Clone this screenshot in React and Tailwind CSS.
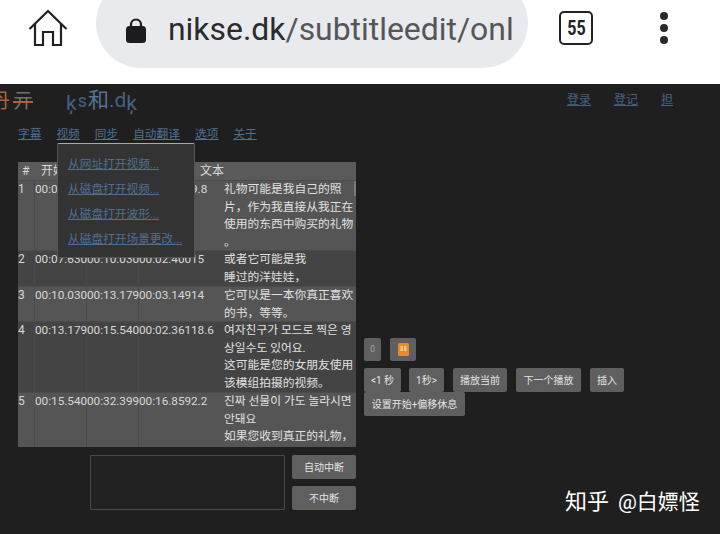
const rows = [
  { n: "1", start: "00:0", end: "", dur: "", cps: "9.8", lines: ["礼物可能是我自己的照", "片，作为我直接从我正在", "使用的东西中购买的礼物", "。"], h: "h-[70px]", bg: "bg-[#555555]" },
  { n: "2", start: "00:07.630", end: "00:10.030", dur: "00:02.400", cps: "15", lines: ["或者它可能是我", "睡过的洋娃娃，"], h: "h-[36px]", bg: "bg-[#444444]" },
  { n: "3", start: "00:10.030", end: "00:13.179", dur: "00:03.149", cps: "14", lines: ["它可以是一本你真正喜欢", "的书，等等。"], h: "h-[35px]", bg: "bg-[#555555]" },
  { n: "4", start: "00:13.179", end: "00:15.540", dur: "00:02.361", cps: "18.6", lines: ["여자친구가 모드로 찍은 영", "상일수도 있어요.", "这可能是您的女朋友使用", "该模组拍摄的视频。"], h: "h-[71px]", bg: "bg-[#444444]" },
  { n: "5", start: "00:15.540", end: "00:32.399", dur: "00:16.859", cps: "2.2", lines: ["진짜 선물이 가도 놀라시면", "안돼요", "如果您收到真正的礼物，"], h: "h-[55px]", bg: "bg-[#555555]" },
];

const navItems = ["字幕", "视频", "同步", "自动翻译", "选项", "关于"];
const menuItems = ["从网址打开视频...", "从磁盘打开视频...", "从磁盘打开波形...", "从磁盘打开场景更改..."];

function Btn({ children, className = "" }) {
  return (
    <button className={`h-6 rounded-[2px] bg-[#5f5f5f] text-[10px] text-[#e4e4e4] ${className}`}>
      {children}
    </button>
  );
}

export default function App() {
  return (
    <div className="relative h-[534px] w-[720px] overflow-hidden bg-[#1f1f1f] font-['Roboto','Noto_Sans_CJK_SC',sans-serif] text-[12px] text-[#d8d8d8]">
      {/* browser bar */}
      <div className="flex h-[84px] items-start overflow-hidden bg-white">
        <svg className="ml-[28px] mt-[9px] h-[38px] w-[40px] shrink-0" viewBox="0 0 40 38" fill="none" stroke="#222" strokeWidth="2.2" strokeLinejoin="miter">
          <path d="M1.5 20 20 2l18.5 18" />
          <path d="M7 15v21h8V23h10v13h8V15" />
        </svg>
        <div className="ml-[28px] -mt-[22px] flex h-[90px] w-[432px] shrink-0 items-center rounded-[45px] bg-[#e9eaee] pl-[30px] pt-[14px]">
          <svg className="h-[25px] w-[20px] shrink-0" viewBox="0 0 20 25" fill="#1c1c1f">
            <path d="M5 10V6.5a5 5 0 0 1 10 0V10" fill="none" stroke="#1c1c1f" strokeWidth="2.2" />
            <rect x="0" y="8" width="20" height="17" rx="3.5" />
          </svg>
          <span className="ml-[22px] w-[346px] overflow-hidden whitespace-nowrap text-[31.9px]">
            <span className="text-[#2b2b2e]">nikse.dk</span>
            <span className="text-[#55565a]">/subtitleedit/onl</span>
          </span>
        </div>
        <div className="ml-[31px] mt-[11px] flex h-[34px] w-[34px] shrink-0 items-center justify-center rounded-[5px] border-[2.5px] border-[#222] text-[20px] font-bold text-[#222]">
          <span className="scale-x-[0.8]">55</span>
        </div>
        <div className="ml-[67px] mt-[12px] flex shrink-0 flex-col gap-[4px]">
          <span className="h-[8px] w-[8px] rounded-full bg-[#2a2a2a]" />
          <span className="h-[8px] w-[8px] rounded-full bg-[#2a2a2a]" />
          <span className="h-[8px] w-[8px] rounded-full bg-[#2a2a2a]" />
        </div>
      </div>

      {/* site header */}
      <div className="flex h-[40px] items-start">
        <div className="-ml-[10px] mt-[3px] flex w-[76px] text-[20px] leading-[28px]">
          <span className="text-[#a9623a]">丹</span>
          <span className="ml-[3px] text-[#77706a] line-through decoration-[#a9623a]">亓</span>
        </div>
        <div className="mt-[2px] whitespace-nowrap text-[21px] leading-[28px] text-[#46627f]">
          <span className="align-[-3px]">ķ</span>
          <span className="ml-[1px] text-[18px]">s</span>
          <span className="ml-[1px] text-[#56738f]">和</span>
          <span>.d</span>
          <span className="align-[-3px]">ķ</span>
        </div>
        <div className="ml-auto mr-[47px] mt-[7px] flex gap-[23px] text-[#46627f] underline">
          <span>登录</span>
          <span>登记</span>
          <span>担</span>
        </div>
      </div>

      {/* nav */}
      <div className="relative flex h-[38px] gap-[15px] pl-[18px] pt-[2px] text-[11.7px] leading-[17px] text-[#4f7092] underline">
        {navItems.map((t) => (
          <span key={t} className="whitespace-nowrap">{t}</span>
        ))}
        <div className="absolute left-[57px] top-[19px] z-10 flex h-[115px] w-[138px] flex-col gap-[8px] rounded-[2px] border border-[#555] border-t-[#aaa] bg-[#333333] pl-[10px] pt-[12px]">
          {menuItems.map((t) => (
            <span key={t} className="w-fit whitespace-nowrap leading-[17px] underline">{t}</span>
          ))}
        </div>
      </div>

      <div className="flex">
        <div className="relative ml-[18px] w-[338px] shrink-0">
          {/* table */}
          <div className="flex h-[18px] items-center bg-[#5a5a5a] leading-[18px]">
            <span className="ml-[4px] w-[19px]">#</span>
            <span>开始</span>
            <span className="ml-[135px]">文本</span>
          </div>
          <span className="absolute right-0 top-[19px] h-[15px] w-[2px] bg-[#7a7a7a]" />
          {rows.map((r) => (
            <div key={r.n} className={`flex ${r.h} ${r.bg} overflow-hidden border-t border-[#4c4c4c] leading-[17.5px]`}>
              <div className="w-[17px] shrink-0 border-r border-[#4a4a4a]">{r.n}</div>
              <div className="flex w-[189px] shrink-0 whitespace-nowrap text-[11.75px]">
                <span className="w-[52px] shrink-0 border-r border-[#4a4a4a]">{r.start}</span>
                <span className="w-[52px] shrink-0 border-r border-[#4a4a4a]">{r.end}</span>
                <span className="w-[52px] shrink-0">{r.dur}</span>
                <span>{r.cps}</span>
              </div>
              <div className="min-w-0 grow text-[11.75px] text-[#e0e0e0]">
                {r.lines.map((l, i) => (
                  <div key={i} className="whitespace-nowrap">{l}</div>
                ))}
              </div>
            </div>
          ))}

          {/* editor */}
          <div className="mt-[8px] flex">
            <div className="ml-[72px] h-[55px] w-[195px] shrink-0 rounded-[1px] border border-[#4a4a4a] bg-[#212121]" />
            <div className="ml-[7px] flex flex-col gap-[7px]">
              <Btn className="w-[64px]">自动中断</Btn>
              <Btn className="w-[64px]">不中断</Btn>
            </div>
          </div>
        </div>

        {/* playback controls */}
        <div className="ml-[8px] pt-[176px]">
          <div className="flex h-[23px] gap-[9px]">
            <div className="flex w-[17px] items-center justify-center rounded-[2px] bg-[#5f5f5f] text-[9px] text-[#a5a5a5]">0</div>
            <div className="flex w-[26px] items-center justify-center rounded-[2px] bg-[#5f5f5f]">
              <svg className="h-[13px] w-[11px]" viewBox="0 0 11 13">
                <rect width="11" height="13" rx="1.5" fill="#e8892b" />
                <rect x="2.5" y="3" width="2.5" height="5" fill="#f5c98a" />
                <rect x="6" y="3" width="2.5" height="5" fill="#f5c98a" />
              </svg>
            </div>
          </div>
          <div className="mt-[7px] flex">
            <Btn className="w-[37px]">&lt;1 秒</Btn>
            <Btn className="ml-[8px] w-[35px]">1秒&gt;</Btn>
            <Btn className="ml-[9px] w-[54px]">播放当前</Btn>
            <Btn className="ml-[9px] w-[65px]">下一个播放</Btn>
            <Btn className="ml-[9px] w-[34px]">插入</Btn>
          </div>
          <Btn className="block w-[101px]">设置开始+偏移休息</Btn>
        </div>
      </div>

      {/* watermark */}
      <div className="absolute left-[565px] top-[488px] flex items-center gap-[9px] whitespace-nowrap text-[22px] leading-[28px] text-white">
        <span>知乎</span>
        <span className="text-[21px]">@白嫖怪</span>
      </div>
    </div>
  );
}
